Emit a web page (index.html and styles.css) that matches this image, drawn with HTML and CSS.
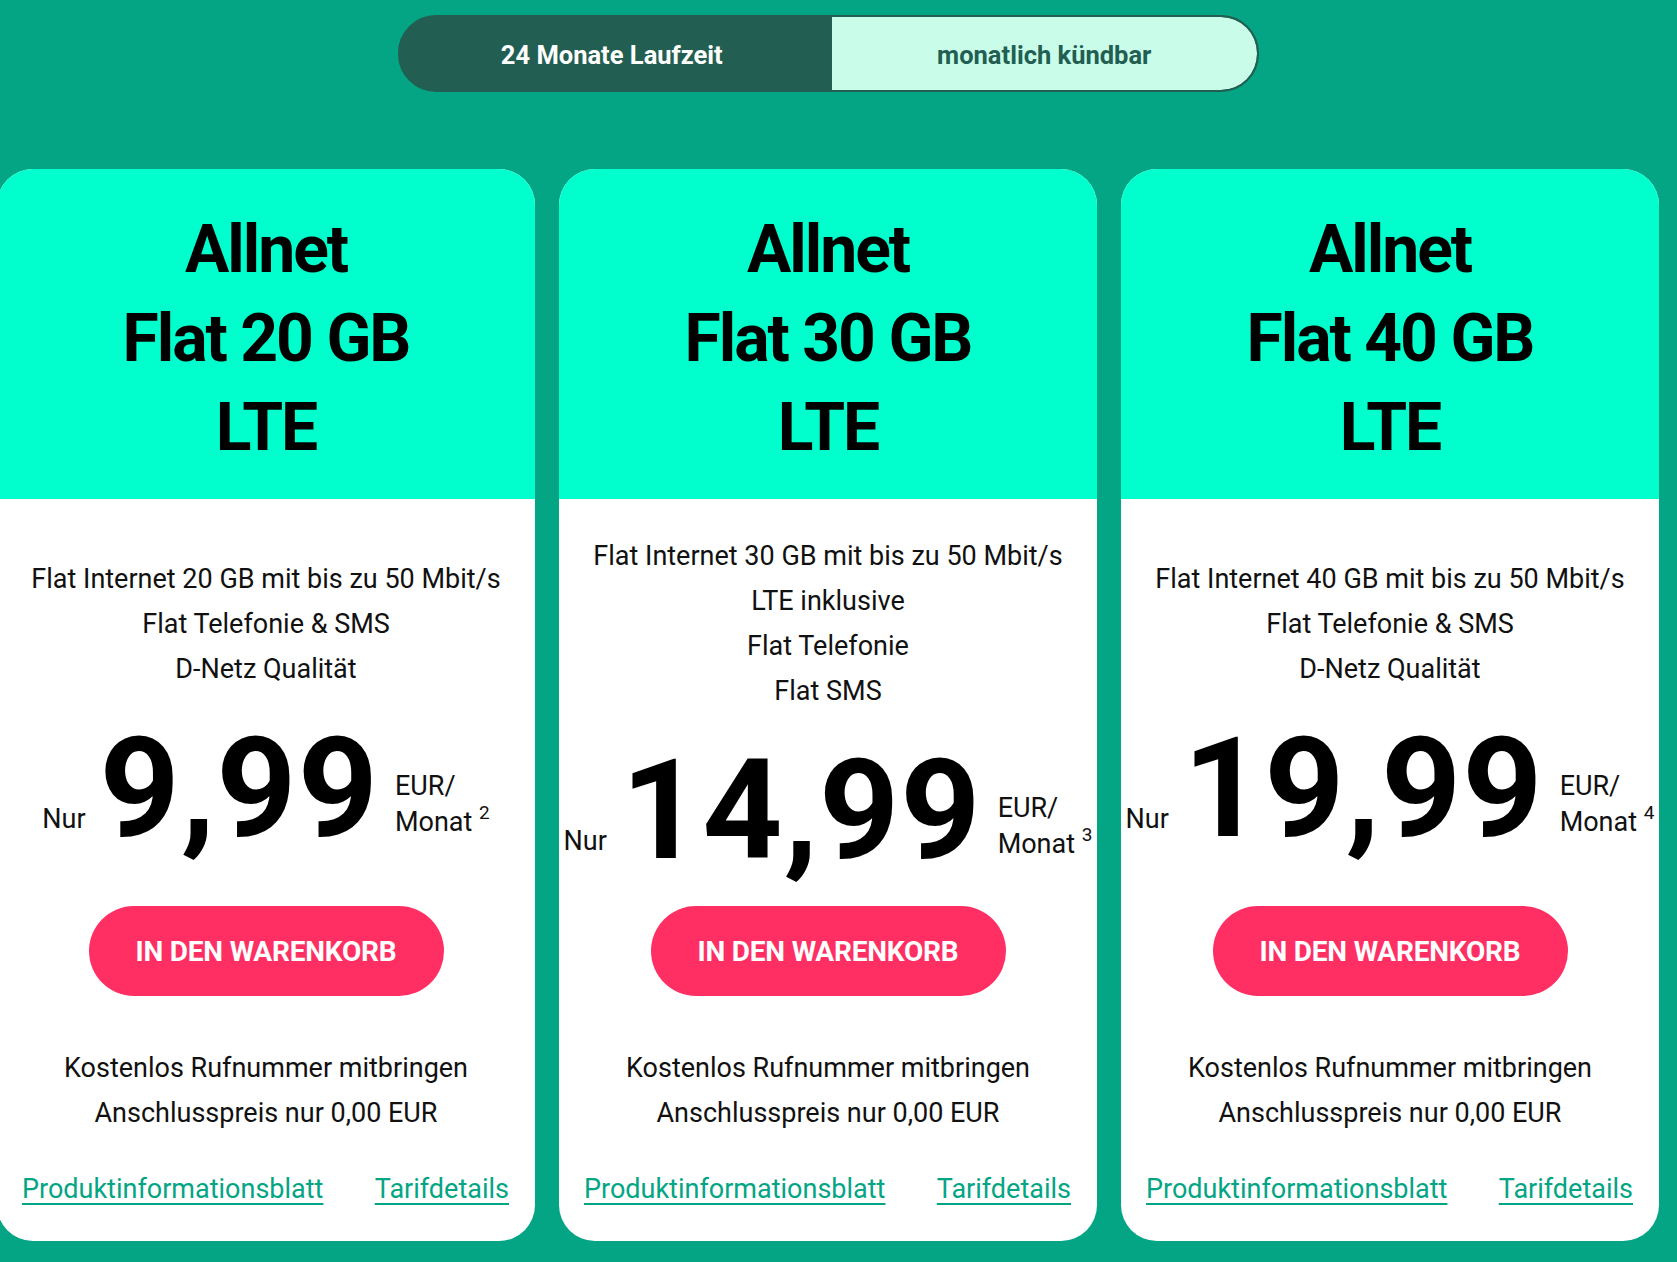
FILE: index.html
```html
<!DOCTYPE html>
<html>
<head>
    <title>Tarife</title>
    <link rel="stylesheet" href="styles.css">
</head>
<body>
    <div class="page">
        <!-- Laufzeit Umschalter -->
        <div class="term-toggle">
            <button class="term-option active">24 Monate Laufzeit</button>
            <button class="term-option">monatlich kündbar</button>
        </div>

        <!-- Tarife -->
        <div class="plans">
            <div class="plan">
                <div class="plan-head">
                    <h2>Allnet<br>Flat 20 GB<br>LTE</h2>
                </div>
                <div class="plan-main">
                    <ul class="features">
                        <li>Flat Internet 20 GB mit bis zu 50 Mbit/s</li>
                        <li>Flat Telefonie &amp; SMS</li>
                        <li>D-Netz Qualität</li>
                    </ul>
                    <div class="price">
                        <span class="price-prefix">Nur</span>
                        <span class="price-value">9,99</span>
                        <span class="price-unit">EUR/<br>Monat <sup>2</sup></span>
                    </div>
                </div>
                <button class="cart-button">IN DEN WARENKORB</button>
                <div class="extras">
                    <div>Kostenlos Rufnummer mitbringen</div>
                    <div>Anschlusspreis nur 0,00 EUR</div>
                </div>
                <div class="plan-links">
                    <a href="#">Produktinformationsblatt</a>
                    <a href="#">Tarifdetails</a>
                </div>
            </div>

            <div class="plan">
                <div class="plan-head">
                    <h2>Allnet<br>Flat 30 GB<br>LTE</h2>
                </div>
                <div class="plan-main">
                    <ul class="features">
                        <li>Flat Internet 30 GB mit bis zu 50 Mbit/s</li>
                        <li>LTE inklusive</li>
                        <li>Flat Telefonie</li>
                        <li>Flat SMS</li>
                    </ul>
                    <div class="price">
                        <span class="price-prefix">Nur</span>
                        <span class="price-value">14,99</span>
                        <span class="price-unit">EUR/<br>Monat <sup>3</sup></span>
                    </div>
                </div>
                <button class="cart-button">IN DEN WARENKORB</button>
                <div class="extras">
                    <div>Kostenlos Rufnummer mitbringen</div>
                    <div>Anschlusspreis nur 0,00 EUR</div>
                </div>
                <div class="plan-links">
                    <a href="#">Produktinformationsblatt</a>
                    <a href="#">Tarifdetails</a>
                </div>
            </div>

            <div class="plan">
                <div class="plan-head">
                    <h2>Allnet<br>Flat 40 GB<br>LTE</h2>
                </div>
                <div class="plan-main">
                    <ul class="features">
                        <li>Flat Internet 40 GB mit bis zu 50 Mbit/s</li>
                        <li>Flat Telefonie &amp; SMS</li>
                        <li>D-Netz Qualität</li>
                    </ul>
                    <div class="price">
                        <span class="price-prefix">Nur</span>
                        <span class="price-value">19,99</span>
                        <span class="price-unit">EUR/<br>Monat <sup>4</sup></span>
                    </div>
                </div>
                <button class="cart-button">IN DEN WARENKORB</button>
                <div class="extras">
                    <div>Kostenlos Rufnummer mitbringen</div>
                    <div>Anschlusspreis nur 0,00 EUR</div>
                </div>
                <div class="plan-links">
                    <a href="#">Produktinformationsblatt</a>
                    <a href="#">Tarifdetails</a>
                </div>
            </div>
        </div>
    </div>
</body>
</html>
```

FILE: styles.css
```css
/* Page */
body {
    margin: 0;
    padding: 0;
    background-color: #03a584;
    font-family: Roboto, "Liberation Sans", sans-serif;
    color: #111;
}

.page {
    width: 1662px;
    margin-left: -3px;
    padding-top: 15px;
}

/* Laufzeit Umschalter */
.term-toggle {
    display: flex;
    width: 861px;
    height: 77px;
    margin: 0 auto 77px auto;
    box-sizing: border-box;
    border: 2px solid #225f52;
    border-radius: 38px;
    background-color: #225f52;
    overflow: hidden;
}

.term-option {
    flex: 1;
    border: none;
    padding: 3px 0 0 0;
    margin: 0;
    background: transparent;
    font-family: Roboto, "Liberation Sans", sans-serif;
    font-size: 25.5px;
    font-weight: bold;
    color: #225f52;
    cursor: pointer;
}

.term-option.active {
    color: #ffffff;
    padding-right: 8px;
}

.term-option:not(.active) {
    background-color: #c9fde9;
    border-radius: 0 36px 36px 0;
}

/* Tarif Karten */
.plans {
    display: grid;
    grid-template-columns: repeat(3, 1fr);
    gap: 24px;
}

.plan {
    display: flex;
    flex-direction: column;
    background-color: #ffffff;
    border-radius: 36px;
    overflow: hidden;
    padding-bottom: 29px;
}

.plan-head {
    height: 330px;
    box-sizing: border-box;
    padding-top: 36px;
    background-color: #00ffcc;
    text-align: center;
}

.plan-head h2 {
    margin: 0;
    font-size: 66px;
    line-height: 89px;
    font-weight: bold;
    letter-spacing: -2px;
    color: #000;
}

.plan-main {
    height: 407px;
    box-sizing: border-box;
    padding-top: 9px;
    display: flex;
    flex-direction: column;
    justify-content: center;
    align-items: center;
}

.features {
    list-style: none;
    margin: 0;
    padding: 0;
    font-size: 27px;
    line-height: 45px;
    text-align: center;
    white-space: nowrap;
}

/* Preis */
.price {
    display: flex;
    align-items: flex-end;
    justify-content: center;
    margin-top: 26px;
    white-space: nowrap;
}

.price-prefix {
    font-size: 27px;
    line-height: 36px;
    margin-bottom: 21px;
    margin-right: 14px;
}

.price-value {
    font-size: 140px;
    line-height: 140px;
    font-weight: bold;
    letter-spacing: 1px;
    color: #000;
}

.price-unit {
    font-size: 27px;
    line-height: 36px;
    margin-bottom: 18px;
    margin-left: 16px;
}

.price-unit sup {
    font-size: 19px;
    line-height: 0;
    vertical-align: 12px;
}

/* Warenkorb Button */
.cart-button {
    display: block;
    width: 355px;
    height: 90px;
    margin: 0 auto;
    padding: 0;
    border: none;
    border-radius: 45px;
    background-color: #ff2e63;
    color: #ffffff;
    font-family: Roboto, "Liberation Sans", sans-serif;
    font-size: 28px;
    font-weight: bold;
    letter-spacing: -0.2px;
    cursor: pointer;
}

.extras {
    margin-top: 50px;
    font-size: 27px;
    line-height: 45px;
    text-align: center;
}

.plan-links {
    display: flex;
    justify-content: space-between;
    margin-top: 31px;
    padding: 0 26px 0 25px;
    font-size: 27px;
    line-height: 45px;
}

.plan-links a {
    color: #03a584;
    text-decoration: underline;
    text-decoration-thickness: 2px;
    text-underline-offset: 5px;
}
```
